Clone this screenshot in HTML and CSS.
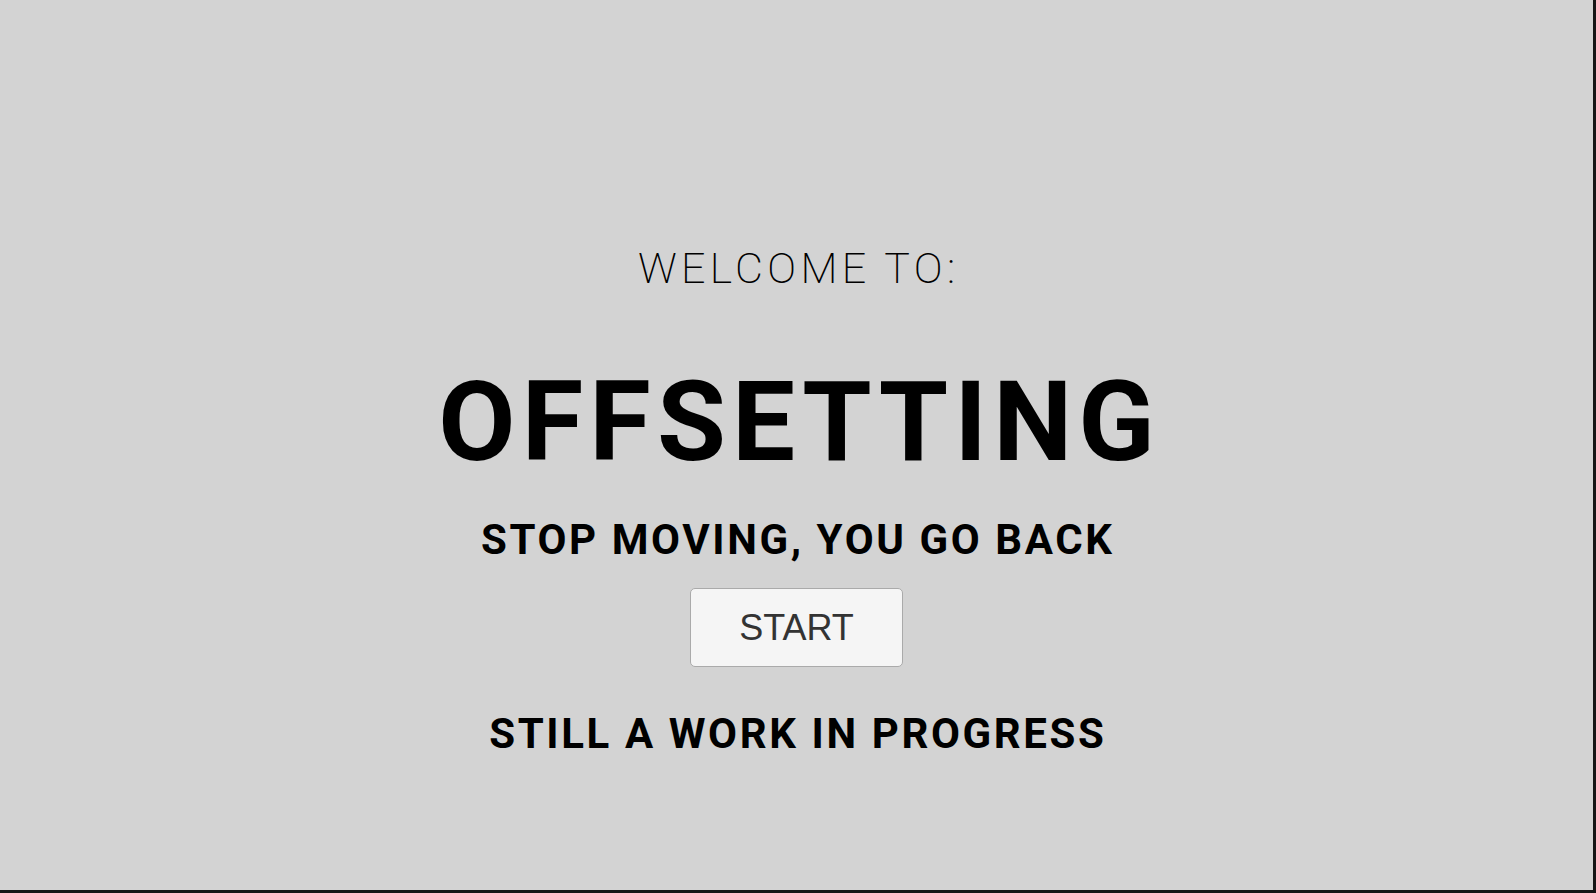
FILE: index.html
```html
<!DOCTYPE html>
<html lang="en">

<head>
    <meta charset="UTF-8">
    <meta name="viewport" content="width=device-width, initial-scale=1.0">
    <title>Offsetting</title>
    <link rel="stylesheet" href="styles.css">
</head>

<body>
    <div class="screen">
        <h3 class="welcome">WELCOME TO:</h3>
        <h1 class="title">OFFSETTING</h1>
        <h2 class="tagline">STOP MOVING, YOU GO BACK</h2>
        <button class="start-btn" id="start">START</button>
        <h2 class="tagline wip">STILL A WORK IN PROGRESS</h2>
    </div>
</body>

</html>
```
FILE: styles.css
```css
* {
    margin: 0;
    padding: 0;
    box-sizing: border-box;
}

body {
    background-color: #161616;
    font-family: Roboto, "Liberation Sans", sans-serif;
    color: #000;
}

.screen {
    width: 1593px;
    height: 890px;
    background-color: lightgray;
    display: flex;
    flex-direction: column;
    align-items: center;
    padding-top: 247px;
}

.screen h1,
.screen h2,
.screen h3 {
    line-height: 1;
    white-space: nowrap;
}

/* padding-left evens out the trailing letter-spacing so text stays centred */
.welcome {
    font-size: 43px;
    font-weight: 200;
    letter-spacing: 0.1em;
    padding-left: 0.1em;
}

.title {
    font-size: 112px;
    font-weight: 700;
    letter-spacing: 0.055em;
    padding-left: 0.055em;
    margin-top: 76px;
}

.tagline {
    font-size: 42px;
    font-weight: 700;
    letter-spacing: 0.062em;
    padding-left: 0.062em;
    margin-top: 41px;
}

.start-btn {
    width: 213px;
    height: 79px;
    margin-top: 27px;
    font-family: "Liberation Sans", Arial, sans-serif;
    font-size: 36px;
    color: #333;
    background-color: #f5f5f5;
    border: 1px solid #aaa;
    border-radius: 5px;
}

.wip {
    margin-top: 46px;
}
```
